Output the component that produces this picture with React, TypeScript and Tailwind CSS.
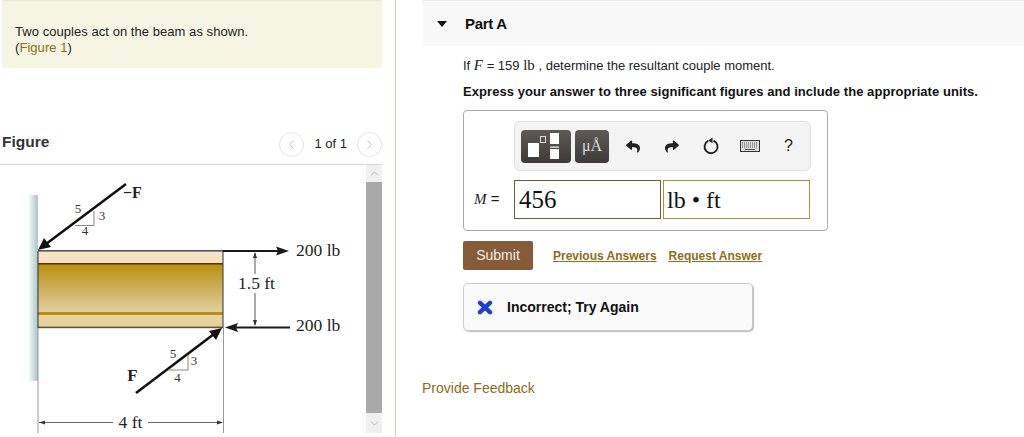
import { ChevronDown, ChevronLeft, ChevronRight, ChevronUp } from "lucide-react";
import { FaReply, FaShare } from "react-icons/fa";

function BeamFigure() {
  return (
    <svg width="366" height="268" viewBox="0 165 366 268" className="block shrink-0" fontFamily="'Liberation Serif', serif" fill="#222">
      <defs>
        <linearGradient id="wall" x1="0" x2="1" y1="0" y2="0">
          <stop offset="0" stopColor="#f2f7f7" />
          <stop offset="1" stopColor="#a9c4c8" />
        </linearGradient>
        <linearGradient id="web" x1="0" x2="0" y1="0" y2="1">
          <stop offset="0" stopColor="#b98f0c" />
          <stop offset="1" stopColor="#e2d0a6" />
        </linearGradient>
        <linearGradient id="flange" x1="0" x2="0" y1="0" y2="1">
          <stop offset="0" stopColor="#f6e4c8" />
          <stop offset="1" stopColor="#e6d09c" />
        </linearGradient>
      </defs>

      <rect x="29" y="195" width="9" height="186" fill="url(#wall)" />

      {/* beam */}
      <rect x="38" y="251" width="185" height="77" fill="url(#flange)" />
      <rect x="38" y="264" width="185" height="49" fill="url(#web)" />
      <rect x="38" y="312" width="185" height="3" fill="#b98f0c" />
      <rect x="38" y="263" width="185" height="1.5" fill="#4d3a10" />
      <rect x="38" y="326" width="185" height="1.5" fill="#b99a50" />
      <rect x="38" y="250" width="185" height="1.6" fill="#555" />
      <rect x="38" y="327" width="185" height="1.2" fill="#555" />
      <line x1="38" y1="251" x2="38" y2="328" stroke="#333" />
      <line x1="223" y1="251" x2="223" y2="328" stroke="#333" />

      {/* extension lines */}
      <line x1="38" y1="328" x2="38" y2="433" stroke="#999" />
      <line x1="223.5" y1="328" x2="223.5" y2="433" stroke="#999" />

      {/* 200 lb couple */}
      <line x1="223" y1="251" x2="280" y2="251" stroke="#1a1a1a" strokeWidth="2" />
      <polygon points="289,251 276,246.5 278,251 276,255.5" fill="#1a1a1a" />
      <line x1="290" y1="327.5" x2="236" y2="327.5" stroke="#1a1a1a" strokeWidth="2" />
      <polygon points="225,327.5 238,323 236,327.5 238,332" fill="#1a1a1a" />
      <text x="296" y="256" fontSize="17.5">200 lb</text>
      <text x="296" y="331" fontSize="17.5">200 lb</text>

      {/* 1.5 ft dimension */}
      <line x1="255" y1="253" x2="255" y2="274" stroke="#555" />
      <line x1="255" y1="293" x2="255" y2="325" stroke="#555" />
      <polygon points="255,252 253,258 257,258" fill="#333" />
      <polygon points="255,326 253,320 257,320" fill="#333" />
      <text x="256.500" y="289" fontSize="17.5" textAnchor="middle">1.5 ft</text>

      {/* -F force */}
      <line x1="126" y1="184" x2="46" y2="244" stroke="#111" strokeWidth="2.6" />
      <polygon points="38,250 44,238 51,247" fill="#111" />
      <polyline points="94,211 94,225.5 75,225.5" fill="none" stroke="#888" />
      <text x="78" y="213" fontSize="13" textAnchor="middle" fill="#333">5</text>
      <text x="102" y="220" fontSize="13" textAnchor="middle" fill="#333">3</text>
      <text x="85" y="235" fontSize="13" textAnchor="middle" fill="#333">4</text>
      <text x="123" y="198" fontSize="16" fontWeight="700">−F</text>

      {/* F force */}
      <line x1="136" y1="393" x2="214" y2="334" stroke="#111" strokeWidth="2.6" />
      <polygon points="222,328 216,340 209,331" fill="#111" />
      <polyline points="188,355 188,370 168,370" fill="none" stroke="#888" />
      <text x="173" y="358" fontSize="13" textAnchor="middle" fill="#333">5</text>
      <text x="194" y="365" fontSize="13" textAnchor="middle" fill="#333">3</text>
      <text x="177.500" y="382" fontSize="13" textAnchor="middle" fill="#333">4</text>
      <text x="132.500" y="381" fontSize="17" fontWeight="700" textAnchor="middle">F</text>

      {/* 4 ft dimension */}
      <line x1="39" y1="422.500" x2="113" y2="422.500" stroke="#666" />
      <line x1="148" y1="422.500" x2="222" y2="422.500" stroke="#666" />
      <polygon points="39,422.500 45,420.500 45,424.500" fill="#333" />
      <polygon points="223,422.500 217,420.500 217,424.500" fill="#333" />
      <text x="130.500" y="428" fontSize="17.500" textAnchor="middle">4 ft</text>
    </svg>
  );
}

function TemplateIcon() {
  return (
    <svg width="50" height="33" viewBox="0 0 50 33">
      <rect x="7" y="13" width="11" height="14" fill="#fff" />
      <rect x="19.500" y="6.500" width="5" height="6" fill="none" stroke="#ddd" />
      <rect x="29" y="3" width="9" height="11" fill="#fff" />
      <rect x="29" y="16.500" width="9" height="1.200" fill="#fff" />
      <rect x="29" y="19" width="9" height="10" fill="#fff" />
    </svg>
  );
}

function ResetIcon() {
  return (
    <svg width="18" height="18" viewBox="0 0 18 18" fill="none">
      <path d="M6.200 3.900 A6.500 6.500 0 1 0 11.500 3.700" stroke="#222" strokeWidth="1.900" />
      <polygon points="10.500,0.500 10.500,6.300 6.200,3.400" fill="#222" />
    </svg>
  );
}

function KeyboardIcon() {
  return (
    <svg width="20" height="12" viewBox="0 0 20 12">
      <rect x="0.500" y="0.500" width="19" height="11" fill="#ddd" stroke="#333" />
      <path d="M2 3h16M2 5h16M2 7h16" stroke="#555" strokeWidth="1" strokeDasharray="1 1" />
      <path d="M5 9.500h10" stroke="#555" strokeWidth="1" />
    </svg>
  );
}

function WrongIcon() {
  return (
    <svg width="16" height="15" viewBox="0 0 16 15" fill="none">
      <path d="M3 2.800 13 12.200M13 2.800 3 12.200" stroke="#2040c8" strokeWidth="4.400" strokeLinecap="round" />
    </svg>
  );
}

export default function App() {
  return (
    <div className="flex h-[437px] w-[1024px] overflow-hidden bg-white font-['Liberation_Sans',sans-serif] text-[#222]">
      <div className="w-[382px] shrink-0">
        <div className="ml-[2px] h-[68px] border-t border-[#e6e6dc] bg-[#f6f5e4] pl-[13px] pt-[23px] text-[13px] leading-[16px] tracking-[0.050px]">
          <p>Two couples act on the beam as shown.</p>
          <p>
            (<span className="text-[#8a6d20]">Figure 1</span>)
          </p>
        </div>
        <div className="mt-[60px] flex h-[37px] items-center justify-between border-b border-[#d8d8d8] pb-[4px]">
          <h2 className="-mt-[5px] pl-[2px] text-[15.500px] font-bold text-[#333]">Figure</h2>
          <div className="flex items-center text-[13px]">
            <span className="flex h-[25px] w-[25px] items-center justify-center rounded-full border border-[#e4e4e4] text-[#aaa]">
              <ChevronLeft size={15} strokeWidth={1.200} />
            </span>
            <span className="mx-[10px]">1 of 1</span>
            <span className="flex h-[25px] w-[25px] items-center justify-center rounded-full border border-[#e4e4e4] text-[#aaa]">
              <ChevronRight size={15} strokeWidth={1.200} />
            </span>
          </div>
        </div>
        <div className="flex h-[268px]">
          <BeamFigure />
          <div className="flex w-[16px] flex-col bg-[#f0f0f0]">
            <div className="flex h-[17px] items-center justify-center text-[#888]">
              <ChevronUp size={13} strokeWidth={1} />
            </div>
            <div className="flex-1 bg-[#a9a9a9]" />
            <div className="flex h-[20px] items-center justify-center text-[#888]">
              <ChevronDown size={13} strokeWidth={1} />
            </div>
          </div>
        </div>
      </div>

      <div className="ml-[13px] w-px shrink-0 bg-[#d9d2bb]" />

      <div className="flex-1 pl-[27px]">
        <div className="flex h-[46px] items-center border-t border-[#e8e8e8] bg-[#f8f8f8] pt-[1px]">
          <span className="ml-[14px] h-0 w-0 border-x-[5px] border-t-[6px] border-x-transparent border-t-[#111]" />
          <span className="ml-[18px] text-[15px] font-bold tracking-[-0.300px] text-[#111]">Part A</span>
        </div>
        <div className="pl-[40px]">
          <p className="mt-[11px] text-[13px] leading-[16px]">
            If <span className="font-['Liberation_Serif',serif] text-[15px] italic">F</span> = 159{" "}
            <span className="font-['Liberation_Serif',serif] text-[15px]">lb</span> , determine the resultant couple moment.
          </p>
          <p className="mt-[10px] text-[13px] font-bold leading-[16px] tracking-[0.060px] text-[#111]">
            Express your answer to three significant figures and include the appropriate units.
          </p>

          <div className="mt-[10px] h-[121px] w-[365px] rounded-[4px] border border-[#aaa] pl-[50px] pt-[10px]">
            <div className="flex h-[50px] w-[297px] items-center rounded-[6px] border border-[#e0e0e0] bg-[#f3f3f3] pl-[6px]">
              <span className="flex h-[33px] w-[50px] items-center justify-center rounded-[4px] bg-gradient-to-b from-[#5f5a58] to-[#3d3a39]">
                <TemplateIcon />
              </span>
              <span className="ml-[4px] flex h-[33px] w-[34px] items-center justify-center rounded-[4px] bg-gradient-to-b from-[#5f5a58] to-[#3d3a39] font-['Liberation_Serif',serif] text-[16px] text-[#ddd]">
                μÅ
              </span>
              <span className="ml-[17px] flex w-[14px] justify-center text-[#222]">
                <FaReply size={15} />
              </span>
              <span className="ml-[25px] flex w-[14px] justify-center text-[#222]">
                <FaShare size={15} />
              </span>
              <span className="ml-[23px] flex w-[18px] justify-center">
                <ResetIcon />
              </span>
              <span className="ml-[20px] flex w-[20px] justify-center">
                <KeyboardIcon />
              </span>
              <span className="ml-[24px] text-[16px] text-[#222]">?</span>
            </div>
            <div className="relative mt-[9px] flex gap-[2px]">
              <span className="absolute -left-[40px] top-[11px] text-[15px] leading-[16px] text-[#222]">
                <span className="font-['Liberation_Serif',serif] italic">M</span> =
              </span>
              <div className="flex h-[39px] w-[147px] items-center border border-[#75583c] pl-[4px] font-['Liberation_Serif',serif] text-[25px] text-[#111]">
                456
              </div>
              <div className="flex h-[39px] w-[147px] items-center border border-[#a88f3a] pl-[3px] font-['Liberation_Serif',serif] text-[24px] text-[#111]">
                lb • ft
              </div>
            </div>
          </div>

          <div className="mt-[10px] flex items-center">
            <button className="h-[29px] w-[70px] rounded-[2px] bg-[#855b38] text-[14px] text-[#f5efe6]">Submit</button>
            <a className="ml-[20px] text-[12px] font-bold text-[#8a6d20] underline">Previous Answers</a>
            <a className="ml-[12px] text-[12px] font-bold text-[#8a6d20] underline">Request Answer</a>
          </div>

          <div className="mt-[13px] flex h-[48px] w-[290px] items-center rounded-[5px] border border-[#ccc] bg-[#f9f9f9] pl-[13px] pt-[1px] shadow-[1px_1px_1px_#bbb]">
            <WrongIcon />
            <span className="ml-[14px] text-[14px] font-bold text-[#111]">Incorrect; Try Again</span>
          </div>
        </div>
        <a className="-ml-px mt-[47px] block text-[14px] text-[#8a6d20]">Provide Feedback</a>
      </div>
    </div>
  );
}
